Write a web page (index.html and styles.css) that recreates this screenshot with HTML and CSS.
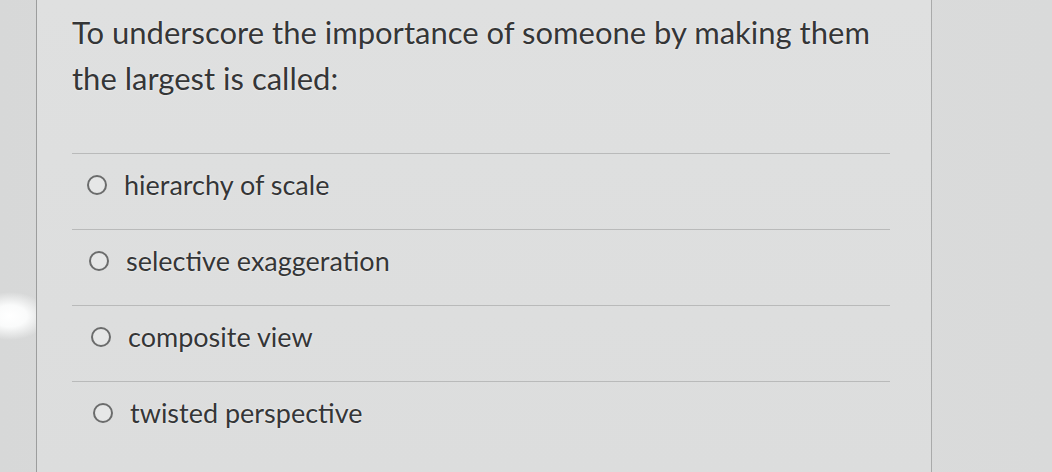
FILE: index.html
```html
<!DOCTYPE html>
<html lang="en">
<head>
<meta charset="utf-8">
<title>Quiz question</title>
<link rel="stylesheet" href="styles.css">
</head>
<body>
<div class="screen">
  <div class="gutter"></div>
  <div class="card">
    <p class="question">To underscore the importance of someone by making them the largest is called:</p>
    <ul class="options">
      <li class="option"><span class="radio"></span><span class="label">hierarchy of scale</span></li>
      <li class="option"><span class="radio"></span><span class="label">selective exaggeration</span></li>
      <li class="option"><span class="radio"></span><span class="label">composite view</span></li>
      <li class="option"><span class="radio"></span><span class="label">twisted perspective</span></li>
    </ul>
  </div>
  <div class="side"></div>
</div>
</body>
</html>
```
FILE: styles.css
```css
html, body {
  margin: 0;
  padding: 0;
}
body {
  width: 1052px;
  height: 472px;
  overflow: hidden;
  font-family: Lato, "Open Sans", sans-serif;
  color: #353637;
  background:
    radial-gradient(ellipse 38px 24px at 10px 316px, #ffffff 0%, #fafbfb 45%, rgba(230,231,231,0) 100%),
    linear-gradient(90deg, #d7d8d8 0%, #dcdddd 40%, #d9dada 100%);
}
.screen {
  display: flex;
  height: 472px;
}
.gutter {
  width: 36px;
  flex: none;
}
.card {
  width: 896px;
  flex: none;
  border-left: 1px solid #9c9d9d;
  border-right: 1px solid #a9aaaa;
  background: linear-gradient(180deg, #dfe0e0 0%, #dcdddd 100%);
  box-sizing: border-box;
  padding: 9px 0 0 35px;
}
.side {
  flex: 1;
}
.question {
  margin: 0;
  width: 820px;
  font-size: 31px;
  line-height: 46px;
  letter-spacing: 0;
  text-shadow: 0 0 2px rgba(255,255,255,0.9);
}
.options {
  list-style: none;
  margin: 52px 0 0 0;
  padding: 0;
  width: 818px;
}
.option {
  display: flex;
  align-items: center;
  gap: 17px;
  height: 76px;
  box-sizing: border-box;
  padding: 0 0 14px 15px;
  border-top: 1px solid #b9baba;
}
.option:nth-child(2) { padding-left: 17px; }
.option:nth-child(3) { padding-left: 19px; }
.option:nth-child(4) { padding-left: 21px; }
.radio {
  width: 16px;
  height: 16px;
  border: 2px solid #6b6c6c;
  border-radius: 50%;
  flex: none;
  background: #e6e7e7;
}
.label {
  font-size: 27px;
  line-height: 32px;
  letter-spacing: 0;
  text-shadow: 0 0 2px rgba(255,255,255,0.9);
}
```
